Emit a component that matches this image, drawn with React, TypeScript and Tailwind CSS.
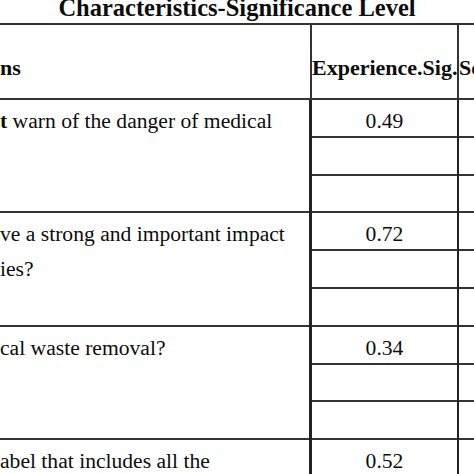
import React from 'react';

type Group = {
  lines: React.ReactNode[];
  sig: string;
};

const groups: Group[] = [
  { lines: [<><b>t</b> warn of the danger of medical</>], sig: '0.49' },
  { lines: ['ve a strong and important impact', 'ies?'], sig: '0.72' },
  { lines: ['cal waste removal?'], sig: '0.34' },
  { lines: ['abel that includes all the'], sig: '0.52' },
];

const SubCells = ({ first }: { first?: string }) => (
  <>
    {[first ?? '', '', ''].map((v, i) => (
      <div key={i} className="h-[37.8px] border-b-2 border-[#333] pt-[4px] leading-[35px] text-center whitespace-nowrap">
        {v}
      </div>
    ))}
  </>
);

export default function App() {
  return (
    <div
      className="w-[474px] h-[474px] overflow-hidden bg-white text-[#0d0d0d]"
      style={{ fontFamily: '"Liberation Serif", "Times New Roman", serif' }}
    >
      {/* Title */}
      <div className="h-[23px] text-center text-[24.5px] font-bold leading-[15px] whitespace-nowrap">
        Characteristics-Significance Level
      </div>

      {/* Table */}
      <div className="border-t-2 border-[#333] text-[21.6px]">
        {/* Header */}
        <div className="flex h-[75px] border-b-2 border-[#333] font-bold text-[22px]">
          <div className="w-[312px] shrink-0 border-r-2 border-[#333] flex items-end pb-[19px] leading-[22px]">
            ns
          </div>
          <div className="w-[147px] shrink-0 border-r-2 border-[#333] flex items-end pb-[19px] leading-[22px] whitespace-nowrap">
            Experience.Sig.
          </div>
          <div className="flex-1 overflow-hidden flex items-end pb-[19px] leading-[22px] whitespace-nowrap">
            Scientific.Sig.
          </div>
        </div>

        {/* Body */}
        {groups.map((g, i) => (
          <div key={i} className="flex">
            <div className="w-[309px] shrink-0 h-[113.4px] border-b-2 border-[#333] pt-[4px] leading-[35px] whitespace-nowrap overflow-hidden">
              {g.lines.map((l, j) => (
                <div key={j}>{l}</div>
              ))}
            </div>
            <div className="w-[150px] shrink-0 border-l-[3px] border-r-2 border-[#222] flex flex-col">
              <SubCells first={g.sig} />
            </div>
            <div className="flex-1 flex flex-col">
              <SubCells />
            </div>
          </div>
        ))}
      </div>
    </div>
  );
}
